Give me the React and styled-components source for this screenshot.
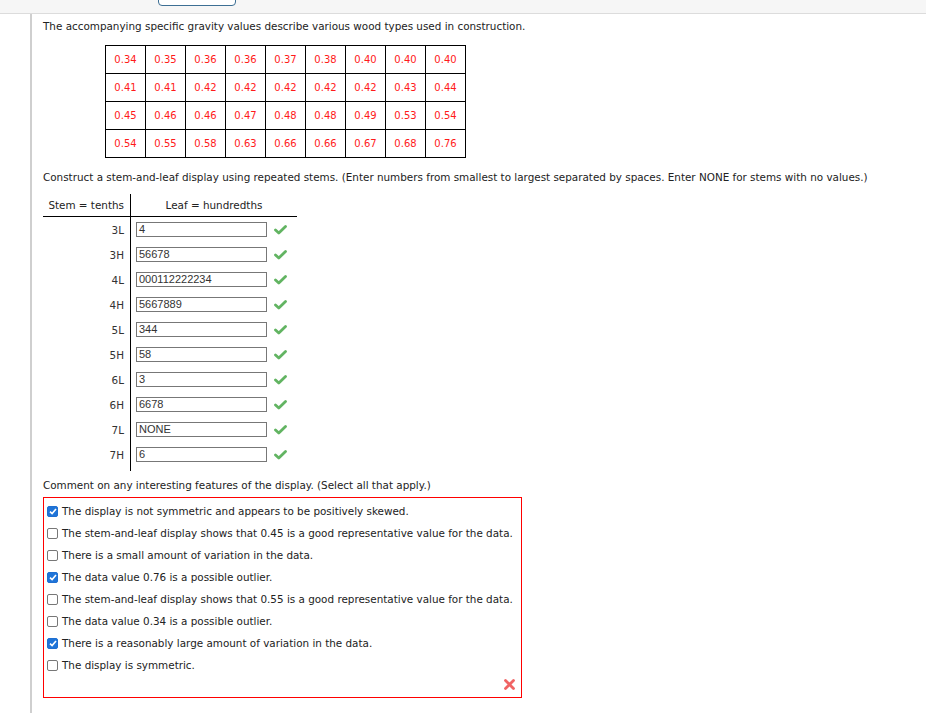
import React from "react";
import styled, { createGlobalStyle } from "styled-components";

const GlobalStyle = createGlobalStyle`
    body {
        margin: 0;
        background: #fff;
        font-family: "DejaVu Sans", Verdana, sans-serif;
        font-size: 10.4px;
        color: #222;
    }
`;

const TopBar = styled.div`
    height: 13px;
    background: #f6f6f6;
    border-bottom: 1px solid #dcdcdc;
    position: relative;
`;

const TopButton = styled.div`
    position: absolute;
    left: 158px;
    top: -6px;
    width: 76px;
    height: 10px;
    border: 1px solid #3d6f94;
    border-radius: 4px;
    background: #fff;
`;

const Main = styled.div`
    box-sizing: border-box;
    margin-left: 30px;
    border-left: 2px solid #cfcfcf;
    padding: 6px 0 0 11px;
    height: 699px;
`;

const Para = styled.p`
    margin: ${(p) => p.$mt || 0}px 0 0 0;
    line-height: 13px;
`;

const DataTable = styled.table`
    border-collapse: collapse;
    margin: 12px 0 0 62px;
`;

const Cell = styled.td`
    border: 1px solid #000;
    width: 39px;
    height: 27px;
    padding: 0;
    text-align: center;
    color: #ff1a1a;
    font-size: 10px;
`;

const StemPlot = styled.div`
    margin-top: 10px;
    display: grid;
    grid-template-columns: 87px 167px;
`;

const HeadCell = styled.div`
    height: 22px;
    display: flex;
    align-items: center;
    justify-content: ${(p) => (p.$center ? "center" : "flex-end")};
    padding-right: ${(p) => (p.$center ? 0 : 6)}px;
    border-bottom: 1px solid #000;
    border-left: ${(p) => (p.$center ? "1px solid #000" : "none")};
`;

const StemCell = styled.div`
    height: 25px;
    display: flex;
    align-items: center;
    justify-content: flex-end;
    padding-right: 6px;
    color: #333;
`;

const LeafCell = styled.div`
    height: 25px;
    display: flex;
    align-items: center;
    border-left: 1px solid #000;
    padding-left: 5px;
    gap: 7px;
    padding-bottom: ${(p) => (p.$last ? 4 : 0)}px;
`;

const LeafInput = styled.div`
    width: 127px;
    height: 13px;
    border: 1px solid #777;
    font-family: "Liberation Sans", Arial, sans-serif;
    font-size: 11px;
    line-height: 13px;
    padding-left: 2px;
    color: #333;
    background: #fff;
`;

const OptionBox = styled.div`
    margin-top: 5px;
    width: 479px;
    height: 201px;
    border: 1px solid #ff0000;
    padding: 2px 0 0 3px;
    box-sizing: border-box;
    position: relative;
`;

const OptionRow = styled.label`
    display: flex;
    align-items: center;
    gap: 4px;
    height: 22px;
    color: #222;
`;

const Box = styled.span`
    box-sizing: border-box;
    width: 11px;
    height: 11px;
    border-radius: 2px;
    border: 1px solid ${(p) => (p.$on ? "#1f6fd1" : "#777")};
    background: ${(p) => (p.$on ? "#1f74d8" : "#fff")};
    display: flex;
    align-items: center;
    justify-content: center;
    flex-shrink: 0;
`;

const Wrong = styled.span`
    position: absolute;
    right: 6px;
    bottom: 5px;
`;

const values = [
    ["0.34", "0.35", "0.36", "0.36", "0.37", "0.38", "0.40", "0.40", "0.40"],
    ["0.41", "0.41", "0.42", "0.42", "0.42", "0.42", "0.42", "0.43", "0.44"],
    ["0.45", "0.46", "0.46", "0.47", "0.48", "0.48", "0.49", "0.53", "0.54"],
    ["0.54", "0.55", "0.58", "0.63", "0.66", "0.66", "0.67", "0.68", "0.76"],
];

const stems = [
    ["3L", "4"],
    ["3H", "56678"],
    ["4L", "000112222234"],
    ["4H", "5667889"],
    ["5L", "344"],
    ["5H", "58"],
    ["6L", "3"],
    ["6H", "6678"],
    ["7L", "NONE"],
    ["7H", "6"],
];

const options = [
    ["The display is not symmetric and appears to be positively skewed.", true],
    ["The stem-and-leaf display shows that 0.45 is a good representative value for the data.", false],
    ["There is a small amount of variation in the data.", false],
    ["The data value 0.76 is a possible outlier.", true],
    ["The stem-and-leaf display shows that 0.55 is a good representative value for the data.", false],
    ["The data value 0.34 is a possible outlier.", false],
    ["There is a reasonably large amount of variation in the data.", true],
    ["The display is symmetric.", false],
];

function Tick() {
    return (
        <svg width="13" height="11" viewBox="0 0 13 11">
            <path d="M1.5 6 L4.8 9 L11.5 2.5" fill="none" stroke="#62b462" strokeWidth="2.8" strokeLinecap="round" strokeLinejoin="round" />
        </svg>
    );
}

function Cross() {
    return (
        <svg width="11" height="11" viewBox="0 0 11 11">
            <path d="M1.5 1.5 L9.5 9.5 M9.5 1.5 L1.5 9.5" stroke="#f06464" strokeWidth="2.8" strokeLinecap="round" />
        </svg>
    );
}

function App() {
    return (
        <>
            <GlobalStyle />
            <TopBar>
                <TopButton />
            </TopBar>
            <Main>
                <Para>The accompanying specific gravity values describe various wood types used in construction.</Para>
                <DataTable>
                    <tbody>
                        {values.map((row, i) => (
                            <tr key={i}>
                                {row.map((v, j) => (
                                    <Cell key={j}>{v}</Cell>
                                ))}
                            </tr>
                        ))}
                    </tbody>
                </DataTable>
                <Para $mt={13}>
                    Construct a stem-and-leaf display using repeated stems. (Enter numbers from smallest to largest separated by spaces. Enter NONE for stems with no values.)
                </Para>
                <StemPlot>
                    <HeadCell>Stem = tenths</HeadCell>
                    <HeadCell $center>Leaf = hundredths</HeadCell>
                    {stems.map(([s, leaf], i) => (
                        <React.Fragment key={s}>
                            <StemCell>{s}</StemCell>
                            <LeafCell $last={i === stems.length - 1}>
                                <LeafInput>{leaf}</LeafInput>
                                <Tick />
                            </LeafCell>
                        </React.Fragment>
                    ))}
                </StemPlot>
                <Para $mt={8}>Comment on any interesting features of the display. (Select all that apply.)</Para>
                <OptionBox>
                    {options.map(([text, on]) => (
                        <OptionRow key={text}>
                            <Box $on={on}>
                                {on && (
                                    <svg width="8" height="7" viewBox="0 0 8 7">
                                        <path d="M1 3.6 L3.1 5.6 L7 1" fill="none" stroke="#fff" strokeWidth="1.6" />
                                    </svg>
                                )}
                            </Box>
                            {text}
                        </OptionRow>
                    ))}
                    <Wrong>
                        <Cross />
                    </Wrong>
                </OptionBox>
            </Main>
        </>
    );
}

export default App;
